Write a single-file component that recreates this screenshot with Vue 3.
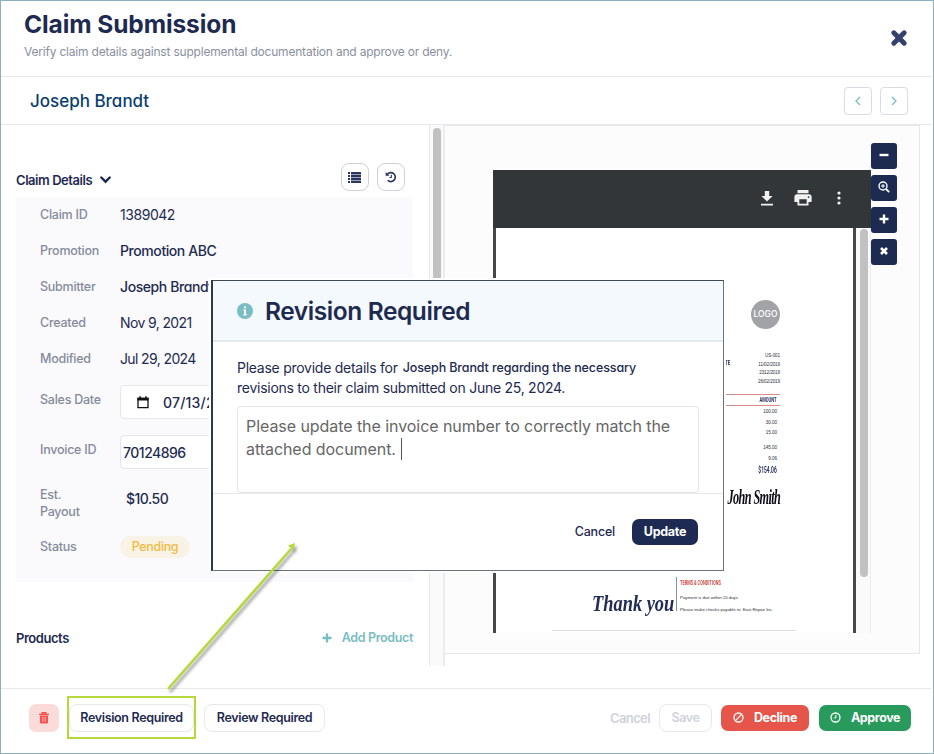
<template>
  <div class="claim-page">
    <!-- Title -->
    <header class="page-header">
      <div>
        <h1>Claim Submission</h1>
        <p class="subtitle">Verify claim details against supplemental documentation and approve or deny.</p>
      </div>
      <button class="close-button" aria-label="Close">
        <svg width="18" height="18" viewBox="0 0 18 18"><path d="M3.8 3.8L14.2 14.2M14.2 3.8L3.8 14.2" stroke="#34426b" stroke-width="5" stroke-linecap="round" /></svg>
      </button>
    </header>

    <!-- Claimant name and pager -->
    <div class="name-bar">
      <h2 class="alt">Joseph Brandt</h2>
      <div class="pager">
        <button><svg width="8" height="10" viewBox="0 0 8 10"><path d="M6 1L2 5L6 9" /></svg></button>
        <button><svg width="8" height="10" viewBox="0 0 8 10"><path d="M2 1L6 5L2 9" /></svg></button>
      </div>
    </div>

    <main class="content">
      <section class="left-panel">
        <div class="section-header">
          <h3>Claim Details</h3>
          <svg class="chevron" width="11" height="8" viewBox="0 0 11 8"><path d="M1.3 1.5L5.5 5.7L9.7 1.5" fill="none" stroke="#1e2a50" stroke-width="2.4" stroke-linecap="round" /></svg>
          <div class="section-tools">
            <button>
              <svg width="13" height="11" viewBox="0 0 13 11" fill="#2a3560">
                <path d="M0 0h2v2H0zM0 3h2v2H0zM0 6h2v2H0zM0 9h2v2H0zM3 0h10v2H3zM3 3h10v2H3zM3 6h10v2H3zM3 9h10v2H3z" />
                <path d="M3 0H13V11H3Z" opacity=".45" />
              </svg>
            </button>
            <button>
              <svg width="12" height="12" viewBox="0 0 12 12" fill="none" stroke="#2a3560" stroke-width="1.6">
                <path d="M2.2 3.4A4.5 4.5 0 1 1 2.6 9.3" />
                <path d="M6.3 3.8V6.5H4.4" stroke-width="1.1" />
                <path d="M.6.9V4.8H4.5Z" fill="#2a3560" stroke="none" />
              </svg>
            </button>
          </div>
        </div>

        <div class="details-card">
          <div v-for="row in details" :key="row.label" class="detail-row">
            <span class="label">{{ row.label }}</span>
            <span class="value" :class="row.style">{{ row.value }}</span>
          </div>
          <div class="detail-row tall">
            <span class="label raised">Sales Date</span>
            <div class="field date-field">
              <svg width="12" height="13" viewBox="0 0 12 13"><path d="M1 2.3H11V11.7H1Z" fill="none" stroke="#111" stroke-width="1.3" /><path d="M.4 1.7H11.6V4.6H.4ZM2.3.2H3.8V2H2.3ZM8.2.2H9.7V2H8.2Z" fill="#111" /></svg>
              <span>07/13/2024</span>
            </div>
          </div>
          <div class="detail-row tall">
            <span class="label raised">Invoice ID</span>
            <div class="field">70124896</div>
          </div>
          <div class="detail-row payout">
            <span class="label">Est.<br>Payout</span>
            <span class="value amount">$10.50</span>
          </div>
          <div class="detail-row status">
            <span class="label">Status</span>
            <span class="pill">Pending</span>
          </div>
        </div>

        <div class="products">
          <h3>Products</h3>
          <button class="add-product">
            <svg width="10" height="10" viewBox="0 0 10 10"><path d="M5 .5V9.5M.5 5H9.5" stroke="#7abdc0" stroke-width="2.4" /></svg>
            <span>Add Product</span>
          </button>
        </div>
      </section>

      <div class="panel-scroll"><div class="panel-thumb"></div></div>

      <!-- Supporting document -->
      <section class="document-panel">
        <div class="viewer">
          <div class="viewer-toolbar">
            <svg width="12" height="15" viewBox="0 0 12 15" fill="#f1f1f1"><path d="M3.8 0H8.2V5H11.6L6 10.6.4 5H3.8ZM0 12.8H12V14.6H0Z" /></svg>
            <svg width="18" height="16" viewBox="0 0 18 16" fill="#f1f1f1">
              <path fill-rule="evenodd" d="M3.5 0H14.5V3.2H3.5ZM3 4.2H15A2.8 2.8 0 0 1 17.6 7V12H14.5V15.6H3.5V12H.4V7A2.8 2.8 0 0 1 3 4.2ZM5.3 9.2V13.8H12.7V9.2ZM14.6 6.2A.9.9 0 1 0 14.6 8 .9.9 0 1 0 14.6 6.2Z" />
            </svg>
            <svg class="dots" width="4" height="14" viewBox="0 0 4 14" fill="#f1f1f1"><circle cx="2" cy="2" r="1.6" /><circle cx="2" cy="7" r="1.6" /><circle cx="2" cy="12" r="1.6" /></svg>
          </div>
          <div class="viewer-body">
            <div class="paper">
              <div class="logo">LOGO</div>
              <div class="invoice-meta">
                <span class="date-tag">TE</span>
                <div class="meta-values">
                  <span v-for="item in invoiceMeta" :key="item">{{ item }}</span>
                </div>
              </div>
              <div class="amount-head"><span>AMOUNT</span></div>
              <div class="amounts">
                <span v-for="item in amounts" :key="item">{{ item }}</span>
              </div>
              <div class="totals">
                <span v-for="item in totals" :key="item">{{ item }}</span>
              </div>
              <div class="grand-total"><span>$154.06</span></div>
              <div class="signature"><span>John Smith</span></div>
              <div class="paper-footer">
                <div class="thanks"><span>Thank you</span></div>
                <div class="terms">
                  <strong>TERMS &amp; CONDITIONS</strong>
                  <span>Payment is due within 15 days</span>
                  <span>Please make checks payable to: East Repair Inc.</span>
                </div>
              </div>
              <div class="paper-rule"></div>
            </div>
            <div class="viewer-scroll"><div class="viewer-thumb"></div></div>
          </div>
        </div>
        <div class="zoom-tools">
          <button><svg width="12" height="12" viewBox="0 0 12 12"><path d="M1.5 6H10.5" stroke-width="2.4" /></svg></button>
          <button>
            <svg width="12" height="12" viewBox="0 0 12 12"><circle cx="5" cy="5" r="4" stroke-width="1.4" /><path d="M5 3V7M3 5H7" stroke-width="1" /><path d="M8 8L11.2 11.2" stroke-width="1.8" /></svg>
          </button>
          <button><svg width="12" height="12" viewBox="0 0 12 12"><path d="M6 1.5V10.5M1.5 6H10.5" stroke-width="2.4" /></svg></button>
          <button><svg width="12" height="12" viewBox="0 0 12 12"><path d="M3 3L9 9M9 3L3 9" stroke-width="2.6" /></svg></button>
        </div>
      </section>
    </main>

    <footer class="page-footer">
      <button class="delete-button">
        <svg width="10" height="12" viewBox="0 0 10 12"><path d="M3.2 2V.8H6.8V2M0 2.4H10" fill="none" stroke="#f4504d" stroke-width="1.4" /><path d="M1 3.5H9V10.2Q9 11.5 7.8 11.5H2.2Q1 11.5 1 10.2Z" fill="#f4504d" /><path d="M3.4 5V9.8M5 5V9.8M6.6 5V9.8" stroke="#fbb" stroke-width=".7" /></svg>
      </button>
      <div class="highlight"><button class="outline-button revision">Revision Required</button></div>
      <button class="outline-button review">Review Required</button>
      <div class="footer-actions">
        <span class="cancel-link">Cancel</span>
        <button class="outline-button save">Save</button>
        <button class="solid-button decline">
          <svg width="11" height="11" viewBox="0 0 11 11"><circle cx="5.5" cy="5.5" r="4.5" /><path d="M2.4 8.6L8.6 2.4" /></svg>
          <span>Decline</span>
        </button>
        <button class="solid-button approve">
          <svg width="11" height="11" viewBox="0 0 11 11"><circle cx="5.5" cy="5.5" r="4.5" /><path d="M5.9 2.8V5.9H3.9" stroke-width="1" /></svg>
          <span>Approve</span>
        </button>
      </div>
    </footer>

    <!-- Revision dialog -->
    <div class="dialog">
      <div class="dialog-header">
        <svg width="16" height="16" viewBox="0 0 16 16"><circle cx="8" cy="8" r="8" fill="#7abdc5" /><path d="M7 3.4H9V5.2H7ZM6.3 6.5H9V11.3H9.8V12.4H6.3V11.3H7.1V7.6H6.3Z" fill="#fff" /></svg>
        <h2>Revision Required</h2>
      </div>
      <div class="dialog-body">
        <p class="intro"><span>Please provide details for</span><span class="alt intro-name">Joseph Brandt regarding the necessary</span></p>
        <p class="intro">revisions to their claim submitted on June 25, 2024.</p>
        <div class="note">
          <p>Please update the invoice number to correctly match the</p>
          <p>attached document.<span class="caret"></span></p>
        </div>
      </div>
      <div class="dialog-footer">
        <span>Cancel</span>
        <button>Update</button>
      </div>
    </div>

    <!-- Pointer from the footer button to the dialog -->
    <svg class="pointer" width="140" height="156" viewBox="0 0 140 156">
      <path d="M8 149L131 9" stroke="#b5d93c" stroke-width="2.6" />
      <path d="M135 3L133.5 10.5L128 5.5Z" fill="#b5d93c" />
    </svg>
  </div>
</template>

<script setup>
import { ref } from 'vue';

// Read-only claim fields
const details = ref([
  { label: 'Claim ID', value: '1389042', style: 'claim-id' },
  { label: 'Promotion', value: 'Promotion ABC', style: 'medium' },
  { label: 'Submitter', value: 'Joseph Brandt', style: 'alt medium' },
  { label: 'Created', value: 'Nov 9, 2021', style: '' },
  { label: 'Modified', value: 'Jul 29, 2024', style: '' }
]);

// Invoice contents
const invoiceMeta = ref(['US-001', '11/02/2019', '2312/2019', '26/02/2019']);
const amounts = ref(['100.00', '30.00', '15.00']);
const totals = ref(['145.00', '9.06']);
</script>

<style>
body {
  background: #fff;
}
</style>

<style scoped>
* {
  box-sizing: border-box;
}

h1, h2, h3, p {
  margin: 0;
}

button {
  display: flex;
  align-items: center;
  justify-content: center;
  padding: 0;
  border: none;
  background: none;
  font-family: inherit;
  color: inherit;
}

svg {
  display: block;
  flex: none;
}

.claim-page {
  position: relative;
  display: flex;
  flex-direction: column;
  width: 934px;
  height: 754px;
  overflow: hidden;
  border: 1px solid #8eafbe;
  background: #fff;
  color: #1e2a50;
  font-family: Inter, "Liberation Sans", sans-serif;
  font-size: 14px;
  white-space: nowrap;
}

.alt {
  font-feature-settings: "cv11";
}

/* Header */
.page-header {
  display: flex;
  justify-content: space-between;
  height: 76px;
  margin-right: 2px;
  padding: 7px 23px 0 23px;
  border-bottom: 1px solid #e6e8eb;
}

h1 {
  font-size: 24.5px;
  line-height: 32px;
  letter-spacing: -0.1px;
}

.subtitle {
  margin-top: 3px;
  color: #8a8f9f;
  font-size: 12px;
  line-height: 18px;
  letter-spacing: -0.2px;
}

.close-button {
  align-self: flex-start;
  margin-top: 21px;
}

.name-bar {
  display: flex;
  align-items: center;
  justify-content: space-between;
  height: 48px;
  margin-right: 2px;
  padding: 0 23px 0 29px;
  border-bottom: 1px solid #e6e8eb;
}

.name-bar h2 {
  color: #0b3e6f;
  font-size: 17px;
  font-weight: 500;
}

.pager {
  display: flex;
  gap: 8px;
}

.pager button {
  width: 28px;
  height: 28px;
  border: 1px solid #d9dce4;
  border-radius: 4px;
}

.pager path {
  fill: none;
  stroke: #7abdba;
  stroke-width: 1.3;
}

/* Left column */
.content {
  display: flex;
  height: 563px;
}

.left-panel {
  width: 428px;
  padding: 38px 16px 0 15px;
}

.section-header {
  display: flex;
  align-items: center;
  height: 34px;
}

h3 {
  padding-bottom: 1px;
  font-size: 13px;
  font-weight: 600;
  letter-spacing: -0.45px;
}

.chevron {
  margin-left: 8px;
}

.section-tools {
  display: flex;
  gap: 8px;
  margin: -6px 8px 0 auto;
}

.section-tools button {
  width: 28px;
  height: 28px;
  border: 1px solid #ced1db;
  border-radius: 8px;
}

.section-tools svg {
  margin-right: 1px;
}

.details-card {
  height: 385px;
  background: #fafafd;
}

.detail-row {
  display: flex;
  align-items: center;
  height: 36px;
  padding: 0 0 1px 24px;
}

.detail-row.tall {
  height: 50px;
  padding-bottom: 0;
}

.detail-row.payout {
  height: 52px;
}

.detail-row.status {
  padding-bottom: 0;
}

.label {
  width: 80px;
  color: #858a9b;
  font-size: 12.5px;
  font-weight: 500;
  line-height: 17px;
  letter-spacing: -0.25px;
}

.raised {
  margin-top: -5px;
}

.status .label {
  margin-top: -1px;
}

.value {
  font-size: 14px;
  letter-spacing: -0.62px;
}

.value.claim-id {
  letter-spacing: -0.45px;
}

.value.medium {
  font-weight: 500;
  letter-spacing: -0.42px;
}

.value.amount {
  margin: -9px 0 0 6px;
  font-weight: 500;
  letter-spacing: -0.5px;
}

.field {
  display: flex;
  align-items: center;
  width: 200px;
  height: 34px;
  padding-left: 2px;
  border: 1px solid #e6e7ec;
  border-radius: 4px;
  background: #fff;
  font-weight: 500;
  letter-spacing: -0.5px;
}

.date-field {
  gap: 14px;
  padding-left: 16px;
  letter-spacing: 0.2px;
}

.pill {
  width: 70px;
  height: 22px;
  border-radius: 11px;
  background: #f9f3e5;
  color: #f3ba43;
  font-size: 12.5px;
  font-weight: 500;
  line-height: 22px;
  text-align: center;
  letter-spacing: -0.35px;
}

.products {
  display: flex;
  align-items: center;
  justify-content: space-between;
  margin-top: 46px;
  height: 20px;
}

.add-product {
  gap: 10px;
  padding-bottom: 1px;
  color: #7abdc0;
  font-size: 12.5px;
  font-weight: 600;
  letter-spacing: -0.35px;
}

.panel-scroll {
  width: 16px;
  height: 541px;
  padding: 3px 0 0 3px;
  border-left: 1px solid #e9e9ea;
  border-right: 2px solid #ececee;
  background: #fafafa;
}

.panel-thumb {
  width: 8px;
  height: 420px;
  border-radius: 4px;
  background: #c1c1c1;
}

/* Document viewer */
.document-panel {
  display: flex;
  width: 475px;
  height: 529px;
  padding: 17px 0 0 48px;
  border: 1px solid #e7e7e9;
  border-left: none;
  background: #fcfcfc;
}

.viewer {
  width: 378px;
  margin-top: 27px;
}

.viewer-toolbar {
  display: flex;
  align-items: center;
  justify-content: flex-end;
  gap: 21px;
  height: 58px;
  padding: 0 30px 2px 0;
  background: #323639;
}

.dots {
  margin-left: 4px;
}

.viewer-body {
  display: flex;
  height: 405px;
}

.paper {
  width: 363px;
  padding: 72px 73px 0 0;
  border: solid #44484b;
  border-width: 0 3px;
  background: #fff;
  color: #2f313d;
  display: flex;
  flex-direction: column;
  align-items: flex-end;
  font-size: 5.5px;
}

.logo {
  width: 29px;
  height: 29px;
  border-radius: 50%;
  background: #a2a3a6;
  color: #fff;
  font-size: 8.5px;
  font-weight: 500;
  line-height: 29px;
  text-align: center;
}

.invoice-meta {
  display: flex;
  justify-content: space-between;
  width: 55px;
  margin-top: 23px;
}

.date-tag {
  width: 6px;
  margin-top: 5px;
  color: #27315c;
  font: 700 8px/12px Roboto, sans-serif;
  transform: scaleX(0.55);
  transform-origin: left;
}

.meta-values {
  display: flex;
  flex-direction: column;
  text-align: right;
  font: 500 4.6px/8.5px "Liberation Sans", sans-serif;
  letter-spacing: -0.1px;
}

.amount-head {
  width: 100%;
  height: 12px;
  margin-top: 8px;
  padding-right: 3px;
  border: solid #dc8d88;
  border-width: 1px 0;
  text-align: right;
}

.amount-head span, .grand-total span {
  display: inline-block;
  color: #27315c;
  font: 700 7.5px/10px Roboto, sans-serif;
  transform: scaleX(0.54);
  transform-origin: right;
}

.amounts, .totals {
  display: flex;
  flex-direction: column;
  padding: 1px 3px 0 0;
  text-align: right;
  font: 500 4.7px/10.7px "Liberation Sans", sans-serif;
  letter-spacing: -0.1px;
}

.totals {
  margin-top: 3px;
}

.grand-total {
  padding-right: 3px;
}

.grand-total span {
  font-size: 8.5px;
  transform: scaleX(0.58);
}

.signature {
  height: 36px;
  margin-top: 8px;
}

.signature span {
  display: inline-block;
  color: #0c0c16;
  font: italic 700 20px/28px "Liberation Serif", serif;
  letter-spacing: -1px;
  transform: scaleX(0.61);
  transform-origin: right;
}

.paper-footer {
  display: flex;
  align-self: flex-start;
  margin: 58px 0 0 96px;
}

.thanks {
  width: 84px;
  padding-top: 15px;
  color: #232c55;
}

.thanks span {
  display: inline-block;
  font: italic 700 23px/24px "Liberation Serif", serif;
  transform: scaleX(0.8);
  transform-origin: left;
}

.terms {
  display: flex;
  flex-direction: column;
  height: 34px;
  padding: 2px 0 0 3px;
  border-left: 1px solid #8b8fa3;
  font: 500 4.4px/12px "Liberation Sans", sans-serif;
  letter-spacing: -0.05px;
}

.terms strong {
  color: #cf4a42;
  font: 700 6.8px/8px Roboto, sans-serif;
  letter-spacing: 0;
  transform: scaleX(0.58);
  transform-origin: left;
}

.terms span:first-of-type {
  margin-top: 5px;
}

.paper-rule {
  align-self: flex-start;
  width: 244px;
  margin: 14px 0 0 56px;
  border-top: 1px solid #dedee0;
}

.viewer-scroll {
  width: 15px;
  padding: 1px 0 0 4px;
  border-right: 1px solid #ececec;
  background: #fafafa;
}

.viewer-thumb {
  width: 8px;
  height: 348px;
  border-radius: 4px;
  background: #c1c1c1;
}

.zoom-tools {
  display: flex;
  flex-direction: column;
  gap: 6px;
}

.zoom-tools button {
  width: 26px;
  height: 26px;
  padding-bottom: 2px;
  border-radius: 3px;
  background: #1d2a51;
}

.zoom-tools svg {
  fill: none;
  stroke: #fff;
}

/* Footer */
.page-footer {
  display: flex;
  align-items: center;
  height: 65px;
  margin-right: 2px;
  padding: 0 20px 6px 28px;
  border-top: 1px solid #e6e8eb;
  font-size: 13px;
  font-weight: 600;
}

.delete-button {
  width: 30px;
  height: 28px;
  border-radius: 7px;
  background: #fbdbda;
}

.highlight {
  height: 43px;
  width: 129px;
  margin: -2px 0 0 8px;
  padding: 6px 0 0;
  border: 2px solid #b5d93c;
}

.outline-button {
  height: 28px;
  padding-bottom: 1px;
  border: 1px solid #e7e8ec;
  border-radius: 8px;
  font-size: 12.5px;
  font-weight: 600;
  letter-spacing: -0.34px;
}

.revision {
  width: 125px;
}

.review {
  width: 121px;
  margin-left: 8px;
}

.footer-actions {
  display: flex;
  align-items: center;
  margin-left: auto;
}

.cancel-link {
  padding-bottom: 1px;
  color: #d0d2dc;
  letter-spacing: -0.6px;
}

.save {
  width: 53px;
  margin: 0 9px;
  color: #d0d2dc;
}

.solid-button {
  gap: 10px;
  width: 88px;
  height: 26px;
  padding-bottom: 1px;
  border-radius: 7px;
  color: #fff;
  font-size: 12.5px;
  font-weight: 700;
  letter-spacing: -0.4px;
}

.solid-button svg {
  fill: none;
  stroke: #fff;
  stroke-width: 1.3;
}

.decline {
  background: #e5554a;
}

.approve {
  width: 92px;
  margin-left: 10px;
  background: #279a5c;
}

/* Dialog */
.dialog {
  position: absolute;
  top: 279px;
  left: 210px;
  width: 513px;
  height: 291px;
  border: solid #6b7280;
  border-width: 1px 1px 1px 2px;
  border-left-color: #2b3b48;
  border-top-color: #3c4a56;
  background: #fff;
  box-shadow: 0 0 0 2px #fff;
}

.dialog-header {
  display: flex;
  align-items: center;
  gap: 12px;
  height: 61px;
  padding-left: 24px;
  border-bottom: 2px solid #e4e9ec;
  background: #f3f9fc;
}

.dialog-header h2 {
  padding-top: 1px;
  font-size: 24.5px;
  font-weight: 600;
  letter-spacing: -0.42px;
}

.dialog-body {
  height: 151px;
  padding: 16px 24px 0;
}

.intro {
  display: flex;
  gap: 5px;
  height: 20px;
  line-height: 20px;
  letter-spacing: -0.26px;
}

.intro + .intro {
  line-height: 19px;
}

.intro-name {
  font-size: 12.5px;
  font-weight: 500;
  letter-spacing: -0.12px;
}

.note {
  width: 462px;
  height: 87px;
  margin-top: 8px;
  padding: 8px;
  border: 1px solid #e3e4e7;
  border-radius: 4px;
  color: #666;
  font-size: 16px;
  line-height: 23px;
  letter-spacing: -0.06px;
}

.caret {
  display: inline-block;
  width: 1px;
  height: 22px;
  margin-left: 5px;
  background: #555;
  vertical-align: -5px;
}

.dialog-footer {
  display: flex;
  align-items: center;
  justify-content: flex-end;
  gap: 17px;
  height: 77px;
  padding: 0 25px 0 0;
  border-top: 1px solid #e6e8eb;
  font-size: 12.5px;
  font-weight: 500;
  letter-spacing: -0.2px;
}

.dialog-footer span {
  padding-bottom: 1px;
}

.dialog-footer button {
  width: 66px;
  height: 26px;
  padding-bottom: 1px;
  border-radius: 7px;
  background: #1d2a51;
  color: #fff;
  font-size: 12.5px;
  font-weight: 700;
  letter-spacing: -0.3px;
}

.pointer {
  position: absolute;
  top: 539px;
  left: 159px;
  filter: drop-shadow(2px 3px 1.5px rgba(0, 0, 0, 0.4));
}
</style>
